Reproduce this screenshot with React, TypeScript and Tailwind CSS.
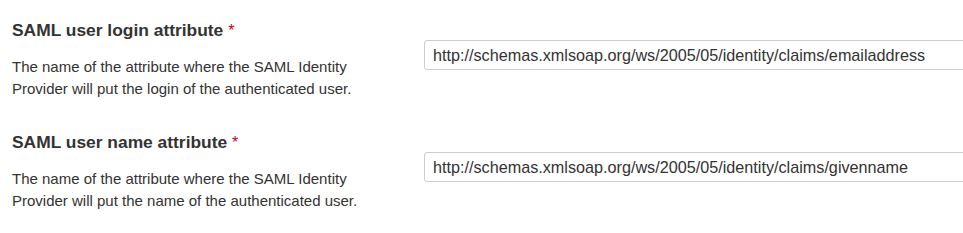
import React from "react";

const fields = [
  {
    title: "SAML user login attribute",
    desc: ["The name of the attribute where the SAML Identity", "Provider will put the login of the authenticated user."],
    value: "http://schemas.xmlsoap.org/ws/2005/05/identity/claims/emailaddress",
  },
  {
    title: "SAML user name attribute",
    desc: ["The name of the attribute where the SAML Identity", "Provider will put the name of the authenticated user."],
    value: "http://schemas.xmlsoap.org/ws/2005/05/identity/claims/givenname",
  },
];

export default function App() {
  return (
    <div className="w-[963px] h-[233px] overflow-hidden bg-white text-[#333] font-['Liberation_Sans',Arial,sans-serif]">
      <div className="pt-[18px]">
        {fields.map((f) => (
          <div key={f.title} className="flex h-[112px]">
            <div className="w-[424px] shrink-0 pl-3">
              <h3 className="text-[17.4px] font-bold leading-[24px]">
                {f.title} <span className="text-[#c0001a] font-normal text-[16px]">*</span>
              </h3>
              <p className="mt-[13px] text-[15px] leading-[22px] text-[#333]">
                {f.desc[0]}
                <br />
                {f.desc[1]}
              </p>
            </div>
            <div className="flex-1 pt-[22px]">
              <input
                readOnly
                value={f.value}
                className="block w-[560px] h-[30px] border border-[#ccc] rounded-[3px] px-2 text-[16.2px] text-[#333] bg-white outline-none font-['Liberation_Sans',Arial,sans-serif]"
              />
            </div>
          </div>
        ))}
      </div>
    </div>
  );
}
